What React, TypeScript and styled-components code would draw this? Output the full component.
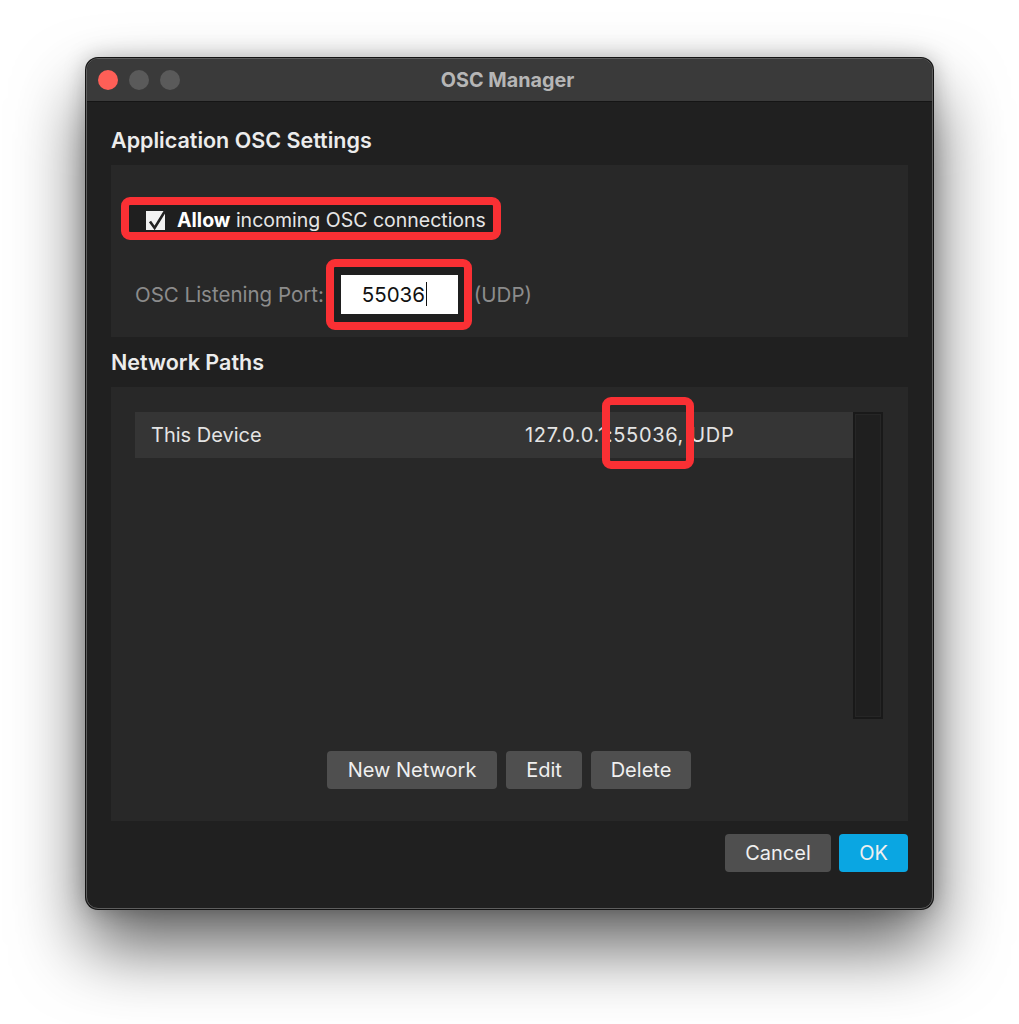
import React from "react";
import styled, { createGlobalStyle } from "styled-components";

const GlobalStyle = createGlobalStyle`
  html, body {
    margin: 0;
    padding: 0;
    background: #ffffff;
  }
  body {
    font-family: Inter, "Open Sans", "Liberation Sans", sans-serif;
    -webkit-font-smoothing: antialiased;
  }
`;

const Page = styled.div`
  padding-top: 58px;
  height: 1024px;
  box-sizing: border-box;
`;

const Window = styled.div`
  width: 847px;
  margin: 0 auto;
  box-sizing: border-box;
  border-radius: 12px;
  border: 1px solid #5e5e5e;
  background: #202020;
  overflow: hidden;
  box-shadow: 0 0 0 1px #141414, 0 0 22px rgba(0, 0, 0, 0.25),
    0 38px 70px rgba(0, 0, 0, 0.62);
`;

const TitleBar = styled.div`
  position: relative;
  height: 42px;
  background: #3a3a3a;
  border-bottom: 1px solid #151515;
  display: flex;
  align-items: center;
  justify-content: center;
`;

const Lights = styled.div`
  position: absolute;
  left: 11px;
  top: 11px;
  display: flex;
  gap: 11px;
`;

const Light = styled.span<{ $color: string }>`
  width: 20px;
  height: 20px;
  border-radius: 50%;
  background: ${(p) => p.$color};
`;

const Title = styled.div`
  font-size: 19.8px;
  font-weight: 700;
  color: #b6b6b6;
  margin-left: -4px;
`;

const Body = styled.div`
  padding: 13px 24px 36px;
  display: flex;
  flex-direction: column;
`;

const Heading = styled.div`
  height: 24px;
  line-height: 24px;
  margin: 13px 0;
  font-size: 21.5px;
  font-weight: 600;
  color: #ececec;
`;

const Panel = styled.div`
  background: #282828;
`;

const SettingsPanel = styled(Panel)`
  padding: 36px 24px 24px;
  display: flex;
  flex-direction: column;
  gap: 36px;
`;

const Row = styled.div`
  height: 38px;
  display: flex;
  align-items: center;
`;

const Marked = styled.span`
  position: relative;
  display: inline-flex;
  align-items: center;
`;

const Mark = styled.span<{ $inset: string; $fill?: boolean }>`
  position: absolute;
  inset: ${(p) => p.$inset};
  border: 8px solid #fa3034;
  border-radius: 9px;
  background: ${(p) => (p.$fill ? "#1f1f1f" : "transparent")};
  z-index: ${(p) => (p.$fill ? 0 : 2)};
  pointer-events: none;
`;

const CheckLabel = styled.label`
  position: relative;
  z-index: 1;
  display: flex;
  align-items: center;
  gap: 9px;
  font-size: 19.5px;
  color: #e6e6e6;
  margin-left: 10px;

  b {
    font-weight: 700;
    color: #ffffff;
  }
`;

const Label = styled.span`
  font-size: 20.5px;
  color: #8c8c8c;
`;

const PortInput = styled.div`
  position: relative;
  z-index: 1;
  width: 117px;
  height: 39px;
  background: #ffffff;
  display: flex;
  align-items: center;
  justify-content: center;
  font-size: 20.5px;
  color: #111;
  box-sizing: border-box;
  padding-right: 10px;
`;

const Caret = styled.span`
  display: inline-block;
  width: 1px;
  height: 24px;
  background: #111;
  margin-left: 1px;
`;

const NetworkPanel = styled(Panel)`
  padding: 25px 25px 32px 24px;
  display: flex;
  flex-direction: column;
  gap: 32px;
`;

const ListArea = styled.div`
  height: 307px;
  display: flex;
`;

const List = styled.div`
  flex: 1;
`;

const ListRow = styled.div`
  height: 46px;
  background: #353535;
  display: grid;
  grid-template-columns: 374px 1fr;
  align-items: center;
  padding-left: 16px;
  font-size: 20px;
  color: #e4e4e4;
`;

const Address = styled.span`
  letter-spacing: 0.65px;
`;

const Scrollbar = styled.div`
  width: 30px;
  box-sizing: border-box;
  background: #1f1f1f;
  border: 2px solid #191919;
  box-shadow: inset 0 0 0 1px #262626;
`;

const ButtonRow = styled.div<{ $justify: string }>`
  display: flex;
  justify-content: ${(p) => p.$justify};
  gap: ${(p) => (p.$justify === "center" ? "9px" : "8px")};
`;

const Button = styled.button<{ $primary?: boolean; $width: number }>`
  width: ${(p) => p.$width}px;
  height: 38px;
  border: none;
  border-radius: 4px;
  background: ${(p) => (p.$primary ? "#0aa6e2" : "#4f4f4f")};
  color: #f0f0f0;
  font-family: inherit;
  font-size: 20px;
  padding: 0;
`;

const Footer = styled(ButtonRow)`
  margin-top: 13px;
`;

function CheckIcon() {
  return (
    <svg width="23" height="24" viewBox="0 0 23 24">
      <rect x="1" y="3" width="19" height="19" fill="#f2f2f2" />
      <path
        d="M5 13.5 L9.6 20 L21 1.5"
        fill="none"
        stroke="#222"
        strokeWidth="2.6"
        strokeLinejoin="miter"
      />
    </svg>
  );
}

export default function App() {
  return (
    <Page>
      <GlobalStyle />
      <Window>
        <TitleBar>
          <Lights>
            <Light $color="#fe5f57" />
            <Light $color="#5a5a5a" />
            <Light $color="#5a5a5a" />
          </Lights>
          <Title>OSC Manager</Title>
        </TitleBar>
        <Body>
          <Heading>Application OSC Settings</Heading>
          <SettingsPanel>
            <Row>
              <Marked>
                <Mark $inset="-11px -15px -8px -14px" $fill />
                <CheckLabel>
                  <CheckIcon />
                  <span>
                    <b>Allow</b> incoming OSC connections
                  </span>
                </CheckLabel>
              </Marked>
            </Row>
            <Row>
              <Label>OSC Listening Port:</Label>
              <Marked style={{ margin: "0 16px 0 17px" }}>
                <Mark $inset="-16px -14px -16px -15px" $fill />
                <PortInput>
                  55036
                  <Caret />
                </PortInput>
              </Marked>
              <Label>(UDP)</Label>
            </Row>
          </SettingsPanel>
          <Heading>Network Paths</Heading>
          <NetworkPanel>
            <ListArea>
              <List>
                <ListRow>
                  <span>This Device</span>
                  <Address>
                    127.0.0.1:
                    <Marked>
                      <Mark $inset="-26px -10px -22px -11px" />
                      55036,
                    </Marked>{" "}
                    UDP
                  </Address>
                </ListRow>
              </List>
              <Scrollbar />
            </ListArea>
            <ButtonRow $justify="center">
              <Button $width={170}>New Network</Button>
              <Button $width={76}>Edit</Button>
              <Button $width={100}>Delete</Button>
            </ButtonRow>
          </NetworkPanel>
          <Footer $justify="flex-end">
            <Button $width={106}>Cancel</Button>
            <Button $width={69} $primary>
              OK
            </Button>
          </Footer>
        </Body>
      </Window>
    </Page>
  );
}
